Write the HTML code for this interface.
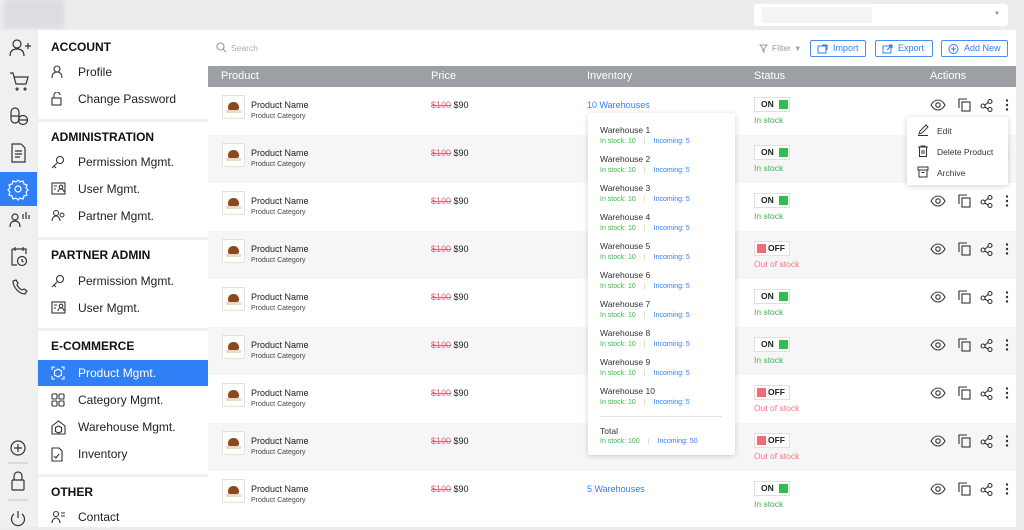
<!DOCTYPE html>
<html><head><meta charset="utf-8"><style>
*{box-sizing:border-box;margin:0;padding:0}
body{width:1024px;height:527px;overflow:hidden;background:#ececec;font-family:"Liberation Sans",sans-serif;position:relative;color:#222}
.abs{position:absolute}
.rail{left:0;top:30px;width:37px;height:497px;background:#f0f0f0}
.side{left:38px;top:30px;width:170px;height:497px;background:#fff}
.sec{position:absolute;left:0;width:170px;height:3px;background:#f0f0f0}
.hd{position:absolute;left:13px;font-size:12px;font-weight:bold;color:#111}
.it{position:absolute;left:0;width:170px;height:26px;font-size:12px;color:#222;padding-left:40px;line-height:26px}
.it svg{position:absolute;left:13px;top:6px}
.main{left:208px;top:30px;width:808px;height:497px;background:#fff}
.th{left:208px;top:66px;width:808px;height:21px;background:#9c9fa3;color:#fff;font-size:11px}
.th span{position:absolute;top:4px}
.row{position:absolute;left:208px;width:808px;height:48px}
.btn{position:absolute;top:40px;height:17px;border:1px solid #4a8ef0;border-radius:2px;color:#2f7ff7;font-size:9px;line-height:15px;padding-left:22px;background:#fff}
.btn svg{position:absolute;left:6px;top:3px}
.pop{left:588px;top:113px;width:147px;height:342px;background:#fff;box-shadow:0 1px 6px rgba(0,0,0,.18);border-radius:2px}
.wh{position:absolute;left:12px;font-size:8.5px;color:#333}
.ws{position:absolute;left:12px;font-size:7px;color:#3cb84a;white-space:nowrap}
.ws b{font-weight:normal;color:#2f7ff7}
.ws i{font-style:normal;color:#ccc;margin:0 8px}
.menu{left:907px;top:117px;width:101px;height:68px;background:#fff;box-shadow:0 1px 6px rgba(0,0,0,.18);border-radius:2px;font-size:8.5px;color:#333}
.menu div{position:absolute;left:30px}
.menu svg{position:absolute;left:-20px;top:-2px}
</style></head><body>
<div class="abs" style="left:4px;top:0;width:60px;height:28px;background:#dcdde0;filter:blur(2px)"></div>
<div class="abs" style="left:754px;top:4px;width:254px;height:22px;background:#fff;border-radius:3px"></div>
<div class="abs" style="left:762px;top:7px;width:110px;height:16px;background:#f4f4f4"></div>
<div class="abs" style="left:994px;top:11px;font-size:6px;color:#888">▼</div>

<div class="abs rail"></div>
<div class="abs" style="left:0;top:172px;width:37px;height:34px;background:#2f7ff7"></div>
<svg class="abs" style="left:0;top:30px" width="37" height="497" fill="none" stroke="#333" stroke-width="1.2">
<circle cx="17" cy="14" r="4"/><path d="M10 26c0-5 3-7 7-7s7 2 7 7M25 16h6M28 13v6"/>
<path d="M10 43h3l3 11h10l2-7H14M17 58a1 1 0 1 0 .1 0M25 58a1 1 0 1 0 .1 0"/>
<rect x="11" y="78" width="8" height="15" rx="4"/><circle cx="23" cy="90" r="4.5"/><path d="M11 86h8M19 90h9"/>
<path d="M12 114h9l4 4v14H12zM15 121h7M15 124h7M15 127h5"/>
<circle cx="18" cy="159" r="3" stroke="#fff"/><path stroke="#fff" d="M18 150l2 2 3-1 1 3 3 1-1 3 2 2-2 2 1 3-3 1-1 3-3-1-2 2-2-2-3 1-1-3-3-1 1-3-2-2 2-2-1-3 3-1 1-3 3 1z"/>
<circle cx="15" cy="187" r="3"/><path d="M10 197c0-4 2-6 5-6s5 2 5 6M23 184v5M26 182v7M29 185v4"/>
<path d="M12 219h14v5M12 219v16h5M15 217v4M23 217v4"/><circle cx="22" cy="231" r="4.5"/><path d="M22 229v2l1.5 1"/>
<path d="M13 251c0 6 6 13 12 13l2-3-3-2-2 1c-2-1-4-3-5-5l1-2-2-3z"/>
<circle cx="18" cy="418" r="7"/><path d="M18 414v8M14 418h8"/>
<path d="M8 433h20M8 470h20" stroke="#ccc"/>
<rect x="12" y="450" width="12" height="10" rx="1"/><path d="M14 450v-4a4 4 0 0 1 8 0v4"/>
<path d="M14 484a6.5 6.5 0 1 0 8 0M18 481v7"/>
</svg>

<div class="abs side">
<div class="hd" style="top:10px">ACCOUNT</div>
<div class="it" style="top:29px"><svg width="12" height="14" fill="none" stroke="#333" stroke-width="1.1"><circle cx="6" cy="4" r="3"/><path d="M1 13c0-4 2-6 5-6s5 2 5 6"/></svg>Profile</div>
<div class="it" style="top:56px"><svg width="12" height="14" fill="none" stroke="#333" stroke-width="1.1"><rect x="1" y="6" width="9" height="7"/><path d="M3 6V3a3 3 0 0 1 6 0"/></svg>Change Password</div>
<div class="sec" style="top:89px"></div>
<div class="hd" style="top:100px">ADMINISTRATION</div>
<div class="it" style="top:119px"><svg width="14" height="14" fill="none" stroke="#333" stroke-width="1.1"><circle cx="9" cy="5" r="3.5"/><path d="M6 8L1 13M3 11l2 2"/></svg>Permission Mgmt.</div>
<div class="it" style="top:146px"><svg width="15" height="13" fill="none" stroke="#333" stroke-width="1.1"><rect x="1" y="1" width="13" height="11"/><circle cx="10" cy="5" r="1.8"/><path d="M7 10c0-2 1.5-3 3-3s3 1 3 3M3 4h3M3 7h2"/></svg>User Mgmt.</div>
<div class="it" style="top:173px"><svg width="15" height="13" fill="none" stroke="#333" stroke-width="1"><circle cx="5" cy="4" r="2.5"/><path d="M1 12c0-3 2-5 4-5s4 2 4 5"/><circle cx="11" cy="6" r="2"/></svg>Partner Mgmt.</div>
<div class="sec" style="top:207px"></div>
<div class="hd" style="top:218px">PARTNER ADMIN</div>
<div class="it" style="top:238px"><svg width="14" height="14" fill="none" stroke="#333" stroke-width="1.1"><circle cx="9" cy="5" r="3.5"/><path d="M6 8L1 13M3 11l2 2"/></svg>Permission Mgmt.</div>
<div class="it" style="top:265px"><svg width="15" height="13" fill="none" stroke="#333" stroke-width="1.1"><rect x="1" y="1" width="13" height="11"/><circle cx="10" cy="5" r="1.8"/><path d="M7 10c0-2 1.5-3 3-3s3 1 3 3M3 4h3M3 7h2"/></svg>User Mgmt.</div>
<div class="sec" style="top:298px"></div>
<div class="hd" style="top:309px">E-COMMERCE</div>
<div class="it" style="top:330px;background:#2f7ff7;color:#fff"><svg width="14" height="14" fill="none" stroke="#fff" stroke-width="1.1"><path d="M1 4V1h3M10 1h3v3M13 10v3h-3M4 13H1v-3"/><path d="M7 3l3.5 2v4L7 11 3.5 9V5z"/></svg>Product Mgmt.</div>
<div class="it" style="top:357px"><svg width="14" height="14" fill="none" stroke="#333" stroke-width="1.1"><rect x="1" y="1" width="5" height="5" rx="1"/><rect x="8" y="1" width="5" height="5" rx="1"/><rect x="1" y="8" width="5" height="5" rx="1"/><rect x="8" y="8" width="5" height="5" rx="1"/></svg>Category Mgmt.</div>
<div class="it" style="top:384px"><svg width="15" height="15" fill="none" stroke="#333" stroke-width="1.1"><path d="M1 6l6.5-5L14 6v8H1z"/><path d="M4.5 7.5l3-1.5 3 1.5v4l-3 1.5-3-1.5z"/></svg>Warehouse Mgmt.</div>
<div class="it" style="top:411px"><svg width="12" height="15" fill="none" stroke="#333" stroke-width="1.1"><path d="M1 1h7l3 3v10H1zM3 9l2 2 3-4"/></svg>Inventory</div>
<div class="sec" style="top:444px"></div>
<div class="hd" style="top:455px">OTHER</div>
<div class="it" style="top:474px"><svg width="15" height="14" fill="none" stroke="#333" stroke-width="1.1"><circle cx="5" cy="4" r="2.5"/><path d="M1 13c0-3 2-5 4-5s4 2 4 5M10 3h4M10 6h4"/></svg>Contact</div>
</div>

<div class="abs main"></div>
<svg class="abs" style="left:216px;top:42px" width="11" height="11" fill="none" stroke="#999" stroke-width="1.1"><circle cx="4.5" cy="4.5" r="3.5"/><path d="M7 7l3 3"/></svg>
<div class="abs" style="left:231px;top:43px;font-size:8.5px;color:#aaa">Search</div>
<svg class="abs" style="left:759px;top:44px" width="9" height="9" fill="none" stroke="#999" stroke-width="1"><path d="M1 1h7L5 5v3L4 7V5z"/></svg>
<div class="abs" style="left:772px;top:43px;font-size:8.5px;color:#999">Filter &nbsp;▾</div>
<div class="btn" style="left:810px;width:56px"><svg width="11" height="10" fill="none" stroke="#2f7ff7"><rect x="1" y="2" width="8" height="7"/><path d="M5 1h5v5"/></svg>Import</div>
<div class="btn" style="left:875px;width:58px"><svg width="11" height="10" fill="none" stroke="#2f7ff7"><rect x="1" y="2" width="8" height="7"/><path d="M5 6l5-5M7 1h3v3"/></svg>Export</div>
<div class="btn" style="left:941px;width:67px"><svg width="11" height="11" fill="none" stroke="#2f7ff7"><circle cx="5.5" cy="5" r="4.5"/><path d="M5.5 2.5v5M3 5h5"/></svg>Add New</div>

<div class="abs th"><span style="left:13px">Product</span><span style="left:223px">Price</span><span style="left:379px">Inventory</span><span style="left:546px">Status</span><span style="left:722px">Actions</span></div>
<div id="rows"></div>

<div class="abs pop" id="pop"></div>
<div class="abs menu">
<div style="top:9px"><svg width="12" height="12" fill="none" stroke="#333"><path d="M2 10l1-3 6-6 2 2-6 6zM1 11.5h10"/></svg>Edit</div>
<div style="top:30px"><svg width="12" height="12" fill="none" stroke="#333"><path d="M1 2h10M4 2V1h4v1M2.5 2v9.5h7V2M5 5v4M7 5v4"/></svg>Delete Product</div>
<div style="top:51px"><svg width="12" height="12" fill="none" stroke="#333"><rect x="1" y="1" width="10" height="3"/><path d="M2 4v7h8V4M4.5 6.5h3"/></svg>Archive</div>
</div>

<script>
var st=[1,1,1,0,1,1,0,0,1],inv=["10 Warehouses","","","","","","","","5 Warehouses"],h="";
for(var i=0;i<9;i++){var y=87+48*i,on=st[i];
h+='<div class="row" style="top:'+y+'px;background:'+(i%2?'#f6f6f6':'#fff')+'">'+
'<div class="abs" style="left:14px;top:8px;width:23px;height:24px;border:1px solid #e2e2e2;background:#fff"><div class="abs" style="left:5px;top:6px;width:11px;height:8px;border-radius:5px 5px 2px 2px;background:#8a4a1c"></div><div class="abs" style="left:3px;top:14px;width:15px;height:3px;background:#e6dcc8"></div></div>'+
'<div class="abs" style="left:43px;top:13px;font-size:9px;color:#222">Product Name</div>'+
'<div class="abs" style="left:43px;top:26px;font-size:7px;color:#444">Product Category</div>'+
'<div class="abs" style="left:223px;top:13px;font-size:9px"><s style="color:#f25a6a;text-decoration-color:#f25a6a">$100</s> $90</div>'+
(inv[i]?'<div class="abs" style="left:379px;top:13px;font-size:9px;color:#2f7ff7">'+inv[i]+'</div>':'')+
'<div class="abs" style="left:546px;top:10px;width:36px;height:15px;border:1px solid #e0e0e0;background:#fff;font-size:8.5px;font-weight:bold;line-height:13px">'+
(on?'<span class="abs" style="left:6px">ON</span><span class="abs" style="left:24px;top:2px;width:9px;height:9px;background:#2fbf4a"></span>':'<span class="abs" style="left:2px;top:2px;width:9px;height:9px;background:#f56a78"></span><span class="abs" style="left:13px">OFF</span>')+'</div>'+
'<div class="abs" style="left:546px;top:28px;font-size:8.5px;color:'+(on?'#3cb84a':'#f57884')+'">'+(on?'In stock':'Out of stock')+'</div>'+
'<svg class="abs" style="left:720px;top:11px" width="90" height="14" fill="none" stroke="#333" stroke-width="1.1"><path d="M3 7c2-3.5 4-5 7-5s5 1.5 7 5c-2 3.5-4 5-7 5s-5-1.5-7-5z"/><circle cx="10" cy="7" r="2.2"/><rect x="34" y="4" width="8" height="9"/><path d="M31 10V1h8"/><circle cx="55" cy="8" r="2"/><circle cx="62" cy="3.5" r="2"/><circle cx="62" cy="11.5" r="2"/><path d="M57 7l3-2.5M57 9l3 2"/><g fill="#333" stroke="none"><circle cx="79" cy="2.5" r="1.2"/><circle cx="79" cy="7" r="1.2"/><circle cx="79" cy="11.5" r="1.2"/></g></svg></div>';}
document.getElementById('rows').innerHTML=h;
var p="";for(var k=0;k<10;k++){var t=12+29*k;p+='<div class="wh" style="top:'+t+'px">Warehouse '+(k+1)+'</div><div class="ws" style="top:'+(t+13)+'px">In stock: 10<i>|</i><b>Incoming: 5</b></div>';}
p+='<div class="abs" style="left:12px;top:303px;width:122px;height:1px;background:#e4e4e4"></div><div class="wh" style="top:313px">Total</div><div class="ws" style="top:325px">In stock: 100<i>|</i><b>Incoming: 50</b></div>';
document.getElementById('pop').innerHTML=p;
</script>
</body></html>
